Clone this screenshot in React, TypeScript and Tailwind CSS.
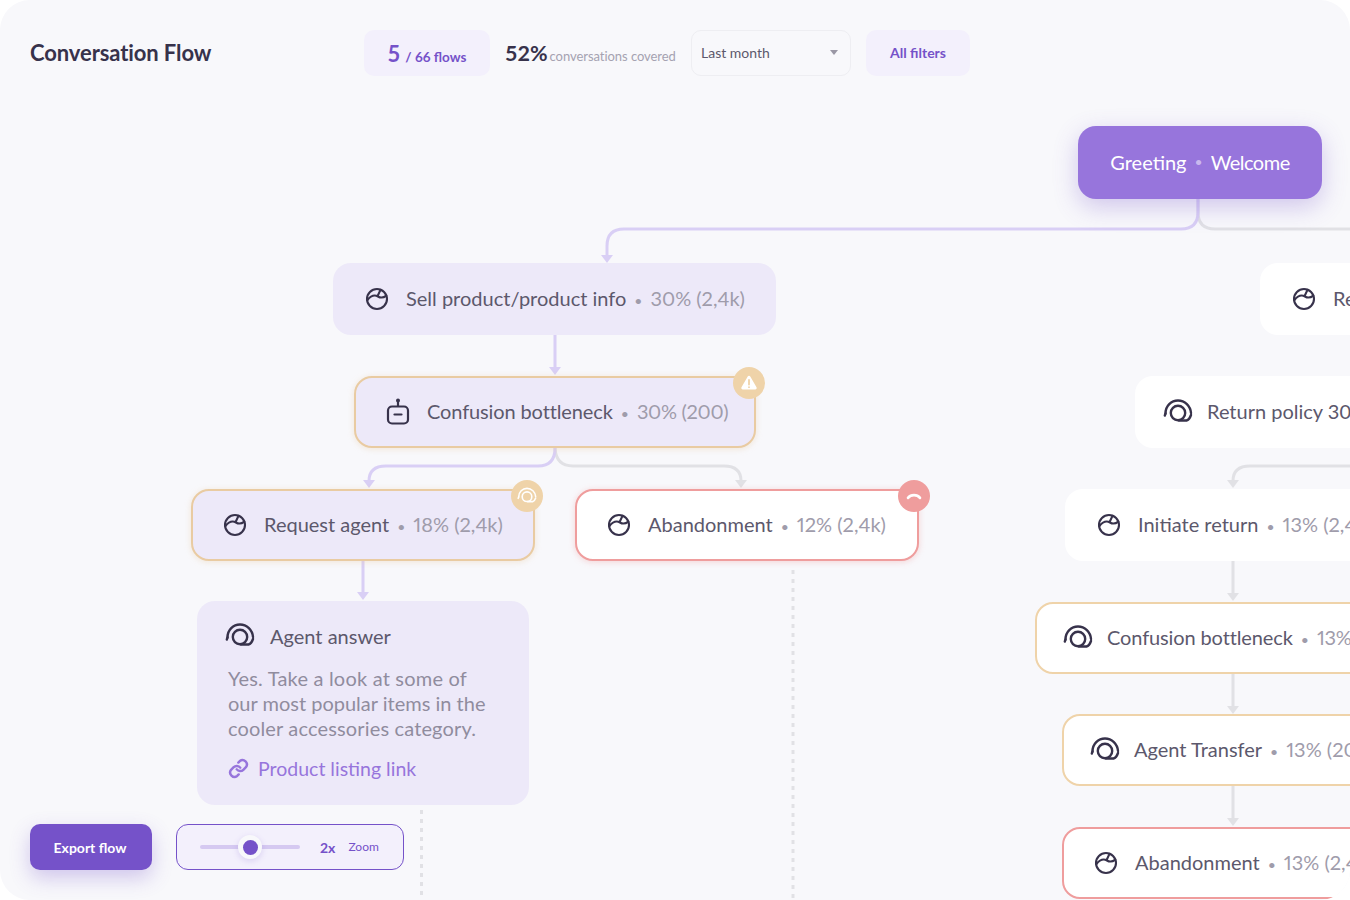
import { ReactNode } from "react"

const PieIcon = () => (
    <svg width="24" height="24" viewBox="0 0 24 24" fill="none" stroke="#37324b" strokeWidth="2.1" strokeLinecap="round" strokeLinejoin="round" className="shrink-0">
        <circle cx="12" cy="12" r="10" />
        <path d="M2.400 13C6 8.500 10 7.800 13 9.500C15.500 11 18.500 10.800 21.300 8.600" />
        <path d="M15.500 2.900L12.600 9" />
    </svg>
)

const AgentIcon = ({ color = "#37324b", size = 30 }: { color?: string; size?: number }) => (
    <svg width={size} height={size} viewBox="0 0 30 30" fill="none" stroke={color} strokeWidth="2.400" strokeLinecap="round" strokeLinejoin="round" className="shrink-0">
        <path d="M2.500 16.500C2.500 9 8.300 3.500 15 3.500C21.800 3.500 27.500 9 28 16" />
        <path d="M2.500 16.500L1.800 18.500" />
        <circle cx="15" cy="16" r="7.200" />
        <path d="M16 23.500H23.500C25.500 23 27 21 28 18" />
    </svg>
)

const BotIcon = () => (
    <svg width="24" height="28" viewBox="0 0 24 28" fill="none" stroke="#37324b" strokeWidth="2.200" strokeLinecap="round" strokeLinejoin="round" className="shrink-0">
        <rect x="2" y="8.500" width="20" height="17" rx="4" />
        <path d="M12 3V8" />
        <circle cx="12" cy="2.600" r="0.900" fill="#37324b" />
        <path d="M8.500 16.500H15.500" />
    </svg>
)

const LinkIcon = () => (
    <svg width="21" height="21" viewBox="0 0 24 24" fill="none" stroke="#9775dc" strokeWidth="2.800" strokeLinecap="round" strokeLinejoin="round" className="shrink-0">
        <path d="M10 13a5 5 0 0 0 7.500.500l3-3a5 5 0 0 0-7-7l-1.700 1.700" />
        <path d="M14 11a5 5 0 0 0-7.500-.500l-3 3a5 5 0 0 0 7 7l1.700-1.700" />
    </svg>
)

const Stat = ({ label, stat, tight }: { label: string; stat: string; tight?: boolean }) => (
    <span className="-mt-[2px] text-[20px] text-[#5c586c] whitespace-nowrap">
        <span className={tight ? "tracking-[-0.12px]" : ""}>{label}</span>
        <span className="text-[#9f9cab] text-[14px] mx-[8px]">•</span>
        <span className={tight ? "text-[#9f9cab] tracking-[-0.3px] proportional-nums" : "text-[#9f9cab] proportional-nums"}>{stat}</span>
    </span>
)

const FlowNode = ({ className, icon, label, stat, tight, children }: { className: string; icon: ReactNode; label: string; stat: string; tight?: boolean; children?: ReactNode }) => (
    <div className={`absolute h-[72px] rounded-[18px] flex items-center ${className}`}>
        <div className="w-[24px] mr-[17px] flex justify-center shrink-0">{icon}</div>
        <Stat label={label} stat={stat} tight={tight} />
        {children}
    </div>
)

const Connectors = () => (
    <svg width="1350" height="900" viewBox="0 0 1350 900" fill="none" className="absolute top-0 left-0">
        <g stroke="#e1e1e5" strokeWidth="3">
            <path d="M1198 199V212Q1198 229 1215 229H1350" />
            <path d="M555 448Q556 466 573 466H724Q741 466 741 481" />
            <path d="M1350 466H1250Q1233 466 1233 481" />
            <path d="M1233 561V594" />
            <path d="M1233 673V707" />
            <path d="M1233 786V819" />
            <path d="M793 570V900" strokeDasharray="4 5" />
            <path d="M421.500 810V900" strokeDasharray="4 5" />
        </g>
        <g fill="#e1e1e5">
            <path d="M735 480H747L741 488Z" />
            <path d="M1227 480H1239L1233 488Z" />
            <path d="M1227 593H1239L1233 601Z" />
            <path d="M1227 706H1239L1233 714Z" />
            <path d="M1227 818H1239L1233 826Z" />
        </g>
        <g stroke="#d9cff5" strokeWidth="3">
            <path d="M1198 199V212Q1198 229 1181 229H624Q607 229 607 246V256" />
            <path d="M555 335V368" />
            <path d="M555 448Q555 466 538 466H386Q369 466 369 481" />
            <path d="M363 561V593" />
        </g>
        <g fill="#d9cff5">
            <path d="M601 255H613L607 263Z" />
            <path d="M549 367H561L555 375Z" />
            <path d="M363 480H375L369 488Z" />
            <path d="M357 592H369L363 600Z" />
        </g>
    </svg>
)

const App = () => {
    return (
        <div className="relative w-[1350px] h-[900px] overflow-hidden rounded-[30px] bg-[#f8f8fb] font-['Lato',sans-serif] text-[#37324b]">
            <Connectors />

            <div className="relative flex items-center mt-[30px] pl-[30px] h-[46px]">
                <h1 className="w-[334px] pb-[2px] text-[22px] font-bold tracking-[-0.1px] text-[#37324b]">Conversation Flow</h1>
                <div className="w-[126px] h-[46px] rounded-[10px] bg-[#f3f0fc] flex items-baseline justify-center pt-[7px] text-[#7552c9] font-bold">
                    <span className="text-[22px] mr-[5px]">5</span>
                    <span className="text-[13.500px]">/ 66 flows</span>
                </div>
                <div className="ml-[15px] w-[171px] flex items-baseline whitespace-nowrap">
                    <span className="text-[21.500px] font-bold">52%</span>
                    <span className="ml-[2px] text-[13px] tracking-[-0.05px] text-[#a5a2b1]">conversations covered</span>
                </div>
                <div className="ml-[15px] w-[160px] h-[46px] pb-[2px] rounded-[10px] border border-[#eeeef2] flex items-center justify-between pl-[9px] pr-[12px] text-[14px] text-[#5c586c]">
                    Last month
                    <span className="w-0 h-0 border-x-[4px] border-x-transparent border-t-[5px] border-t-[#9a97a5]"></span>
                </div>
                <div className="ml-[15px] w-[104px] h-[46px] pb-[2px] rounded-[10px] bg-[#f3f0fc] flex items-center justify-center text-[14px] font-bold text-[#7552c9]">All filters</div>
            </div>

            <div className="absolute left-[1078px] top-[126px] w-[244px] h-[73px] rounded-[18px] bg-[#9775dc] shadow-[0_8px_24px_rgba(117,82,201,0.3)] flex items-center justify-center pb-[2px] text-[20px] text-white">
                Greeting
                <span className="text-[#c9b8ee] text-[14px] mx-[8px]">•</span>
                <span className="tracking-[-0.5px]">Welcome</span>
            </div>

            <FlowNode className="left-[333px] top-[263px] w-[443px] pl-[32px] bg-[#ede9f9]" icon={<PieIcon />} label="Sell product/product info" stat="30% (2,4k)" />
            <FlowNode className="left-[354px] top-[376px] w-[402px] pl-[30px] bg-[#ede9f9] border-2 border-[#e9cba2] shadow-[0_1px_6px_rgba(233,203,162,0.4)]" icon={<BotIcon />} label="Confusion bottleneck" stat="30% (200)" tight>
                <div className="absolute -top-[11px] -right-[11px] w-[32px] h-[32px] rounded-full bg-[#efd3a9] flex items-center justify-center">
                    <svg width="18" height="18" viewBox="0 0 24 24" fill="#fff">
                        <path d="M10.300 3.300a2 2 0 0 1 3.400 0l8.300 14.400a2 2 0 0 1-1.700 3H3.700a2 2 0 0 1-1.700-3Z" />
                        <path d="M12 8v6M12 17.500v.1" stroke="#efd3a9" strokeWidth="2.400" strokeLinecap="round" />
                    </svg>
                </div>
            </FlowNode>
            <FlowNode className="left-[191px] top-[489px] w-[344px] pl-[30px] bg-[#ede9f9] border-2 border-[#e9cba2] shadow-[0_1px_6px_rgba(233,203,162,0.4)]" icon={<PieIcon />} label="Request agent" stat="18% (2,4k)">
                <div className="absolute -top-[11px] -right-[10px] w-[32px] h-[32px] rounded-full bg-[#efd3a9] flex items-center justify-center">
                    <AgentIcon color="#fff" size={20} />
                </div>
            </FlowNode>
            <FlowNode className="left-[575px] top-[489px] w-[344px] pl-[30px] bg-white border-2 border-[#ef9d9d] shadow-[0_1px_6px_rgba(239,157,157,0.4)]" icon={<PieIcon />} label="Abandonment" stat="12% (2,4k)">
                <div className="absolute -top-[11px] -right-[13px] w-[32px] h-[32px] rounded-full bg-[#ef9d9d] flex items-center justify-center">
                    <svg width="18" height="18" viewBox="0 0 24 24" fill="none" stroke="#fff" strokeWidth="3.500" strokeLinecap="round">
                        <path d="M4 14.500C8 9.500 16 9.500 20 14.500" />
                    </svg>
                </div>
            </FlowNode>

            <div className="absolute left-[197px] top-[601px] w-[332px] h-[204px] rounded-[18px] bg-[#ede9f9] pt-[20px] pl-[31px]">
                <div className="flex items-center h-[30px] -ml-[3px]">
                    <AgentIcon />
                    <span className="ml-[15px] text-[20px] text-[#5c586c]">Agent answer</span>
                </div>
                <p className="mt-[15px] text-[20px] leading-[25px] text-[#908c9e] whitespace-nowrap">
                    <span className="tracking-[0.2px]">Yes. Take a look at some of</span><br />our most popular items in the<br /><span className="tracking-[0.15px]">cooler accessories category.</span>
                </p>
                <div className="mt-[13px] flex items-center text-[19.500px] text-[#9775dc]">
                    <LinkIcon />
                    <span className="ml-[9px]">Product listing link</span>
                </div>
            </div>

            <FlowNode className="left-[1260px] top-[263px] w-[400px] pl-[32px] bg-white" icon={<PieIcon />} label="Return request" stat="30% (2,4k)" />
            <FlowNode className="left-[1135px] top-[376px] w-[400px] pl-[31px] bg-white" icon={<AgentIcon />} label="Return policy 30 days" stat="30% (2,4k)" />
            <FlowNode className="left-[1065px] top-[489px] w-[400px] pl-[32px] bg-white" icon={<PieIcon />} label="Initiate return" stat="13% (2,4k)" />
            <FlowNode className="left-[1035px] top-[602px] w-[420px] pl-[29px] bg-white border-2 border-[#efd3a9]" icon={<AgentIcon />} label="Confusion bottleneck" stat="13% (200)" tight />
            <FlowNode className="left-[1062px] top-[714px] w-[400px] pl-[29px] bg-white border-2 border-[#efd3a9]" icon={<AgentIcon />} label="Agent Transfer" stat="13% (200)" />
            <FlowNode className="left-[1062px] top-[827px] w-[400px] pl-[30px] bg-white border-2 border-[#ef9d9d]" icon={<PieIcon />} label="Abandonment" stat="13% (2,4k)" />

            <div className="absolute left-[30px] top-[824px] flex gap-[24px]">
                <button className="w-[122px] h-[46px] pr-[2px] rounded-[10px] bg-[#7552c9] text-[14px] font-bold text-white shadow-[0_8px_20px_rgba(117,82,201,0.3)]">Export flow</button>
                <div className="w-[228px] h-[46px] rounded-[12px] border border-[#7552c9] bg-[#f3f0fc] flex items-center pl-[23px]">
                    <div className="relative w-[100px] h-[4px] rounded-full bg-[#d5c9f1]">
                        <div className="absolute left-[38px] -top-[10px] w-[24px] h-[24px] rounded-full bg-[#f8f8fb] shadow-[0_2px_6px_rgba(117,82,201,0.2)] flex items-center justify-center">
                            <div className="w-[15px] h-[15px] rounded-full bg-[#7552c9]"></div>
                        </div>
                    </div>
                    <span className="ml-[20px] text-[14px] font-bold text-[#7552c9]">2x</span>
                    <span className="ml-[13px] text-[12px] text-[#7552c9]">Zoom</span>
                </div>
            </div>
        </div>
    )
}

export default App
